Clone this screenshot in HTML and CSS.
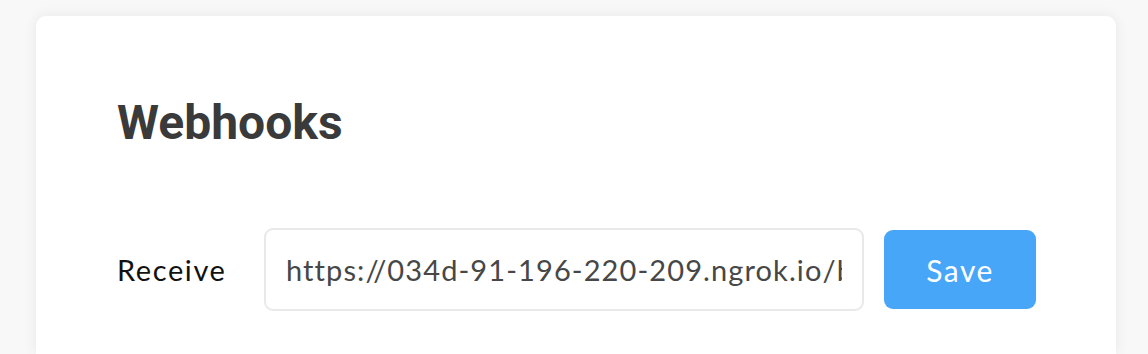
FILE: index.html
```html
<!DOCTYPE html>
<html>
<head>
<meta charset="utf-8">
<link rel="stylesheet" href="styles.css">
</head>
<body>
<div class="page">
  <section class="card">
    <h2 class="title">Webhooks</h2>
    <div class="row">
      <label class="label">Receive</label>
      <div class="input"><span class="value">https://034d-91-196-220-209.ngrok.io/b</span></div>
      <button class="btn">Save</button>
    </div>
  </section>
</div>
</body>
</html>
```
FILE: styles.css
```css
html, body {
  margin: 0;
  padding: 0;
  background: #f8f8f8;
  height: 354px;
  overflow: hidden;
}
.page {
  padding: 16px 32px 0 36px;
}
.card {
  background: #fff;
  border-radius: 10px;
  box-shadow: 0 0 14px rgba(0,0,0,0.07);
  padding: 77px 80px 0 81px;
  height: 338px;
  border-bottom-left-radius: 0;
  border-bottom-right-radius: 0;
  box-sizing: border-box;
}
.title {
  margin: 0;
  font-family: Roboto, "Liberation Sans", sans-serif;
  font-weight: 700;
  font-size: 48px;
  line-height: 60px;
  color: #3a3a3a;
}
.row {
  display: flex;
  align-items: center;
  margin-top: 75px;
}
.label {
  font-family: Lato, "Noto Sans", sans-serif;
  font-size: 29px;
  letter-spacing: 1.6px;
  color: #111;
  width: 147px;
}
.input {
  width: 600px;
  height: 83px;
  box-sizing: border-box;
  border: 2px solid #e9e9e9;
  border-radius: 9px;
  padding: 0 20px 0 20px;
  display: flex;
  align-items: center;
}
.value {
  display: block;
  flex: 1;
  overflow: hidden;
  white-space: nowrap;
  font-family: Lato, "Noto Sans", sans-serif;
  font-size: 29px;
  letter-spacing: 1.1px;
  color: #474747;
}
.btn {
  margin-left: 20px;
  width: 152px;
  height: 79px;
  border: none;
  border-radius: 9px;
  background: #48a6f8;
  color: #fff;
  font-family: Lato, "Noto Sans", sans-serif;
  font-size: 30px;
  letter-spacing: 1.5px;
}
```
